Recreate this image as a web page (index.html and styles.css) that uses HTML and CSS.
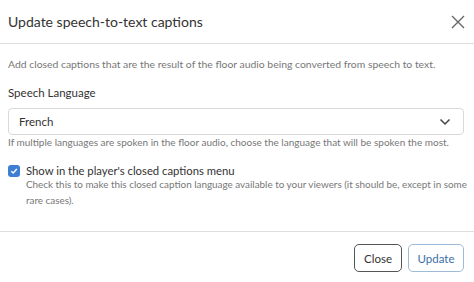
FILE: index.html
```html
<!DOCTYPE html>
<html lang="en">
  <head>
    <meta charset="UTF-8" />
    <meta name="viewport" content="width=device-width, initial-scale=1.0" />
    <title>Update speech-to-text captions</title>
    <link rel="stylesheet" href="styles.css">
  </head>
  <body>
    <div class="modal">
      <!-- Header -->
      <div class="modal-header">
        <h2 class="modal-title">Update speech-to-text captions</h2>
        <span class="close">
          <svg width="14" height="14" viewBox="0 0 14 14">
            <path d="M1 1 L13 13 M13 1 L1 13" stroke="#666" stroke-width="1.4" fill="none" />
          </svg>
        </span>
      </div>

      <!-- Body -->
      <div class="modal-body">
        <p class="intro">Add closed captions that are the result of the floor audio being converted from speech to text.</p>

        <label class="field-label">Speech Language</label>
        <div class="select">
          <span>French</span>
          <svg width="12" height="8" viewBox="0 0 12 8">
            <path d="M1.5 1.5 L6 6 L10.5 1.5" stroke="#444" stroke-width="1.5" fill="none" />
          </svg>
        </div>
        <p class="help">If multiple languages are spoken in the floor audio, choose the language that will be spoken the most.</p>

        <div class="check-row">
          <span class="checkbox">
            <svg width="8" height="8" viewBox="0 0 8 8">
              <path d="M1.3 4.2 L3.2 6 L6.8 2" stroke="#fff" stroke-width="1.4" fill="none" />
            </svg>
          </span>
          <div class="check-text">
            <div class="check-label">Show in the player's closed captions menu</div>
            <p class="check-help">Check this to make this closed caption language available to your viewers (it should be, except in some rare cases).</p>
          </div>
        </div>
      </div>

      <!-- Footer -->
      <div class="modal-footer">
        <button class="btn btn-close">Close</button>
        <button class="btn btn-update">Update</button>
      </div>
    </div>
  </body>
</html>
```

FILE: styles.css
```css
/* Basic reset */
body,
html {
  margin: 0;
  padding: 0;
  font-family: Lato, "Open Sans", sans-serif;
  background-color: #fff;
}

.modal {
  width: 474px;
  height: 282px;
  display: flex;
  flex-direction: column;
}

/* Header */
.modal-header {
  height: 43px;
  display: flex;
  align-items: center;
  justify-content: space-between;
  padding: 0 9px 0 8px;
  border-bottom: 1px solid #dedede;
}

.modal-title {
  margin: 0;
  font-size: 14px;
  font-weight: normal;
  color: #333;
}

.close {
  display: flex;
  cursor: pointer;
}

/* Body */
.modal-body {
  padding: 12px 2px 0 8px;
  height: 175px;
  border-bottom: 1px solid #dedede;
}

.intro {
  margin: 0 0 12px;
  font-size: 10.4px;
  line-height: 16px;
  color: #777;
}

.field-label {
  display: block;
  font-size: 11.5px;
  line-height: 18px;
  color: #333;
  margin-bottom: 6px;
}

.select {
  height: 25px;
  margin-right: 8px;
  border: 1px solid #d9d9d9;
  border-radius: 4px;
  display: flex;
  align-items: center;
  justify-content: space-between;
  padding: 0 12px 0 10px;
  font-size: 11.5px;
  color: #333;
}

.help {
  margin: 0;
  font-size: 10px;
  line-height: 14px;
  color: #777;
}

.check-row {
  display: flex;
  gap: 6px;
  margin-top: 15px;
}

.checkbox {
  flex-shrink: 0;
  width: 12px;
  height: 12px;
  margin-top: 1px;
  border-radius: 3px;
  background-color: #3e7fd6;
  display: flex;
  align-items: center;
  justify-content: center;
}

.check-label {
  font-size: 11.3px;
  line-height: 14px;
  color: #333;
}

.check-help {
  margin: -2px 0 0;
  font-size: 9.9px;
  line-height: 16px;
  color: #777;
}

/* Footer */
.modal-footer {
  display: flex;
  justify-content: flex-end;
  gap: 6px;
  padding: 12px 10px 0 0;
}

.btn {
  height: 28px;
  font-family: Lato, "Open Sans", sans-serif;
  font-size: 11.5px;
  background-color: #fff;
  border-radius: 5px;
  cursor: pointer;
}

.btn-close {
  width: 48px;
  border: 1px solid #555;
  color: #333;
}

.btn-update {
  width: 56px;
  border: 1px solid #9dbad6;
  color: #3c6ea6;
}
```
